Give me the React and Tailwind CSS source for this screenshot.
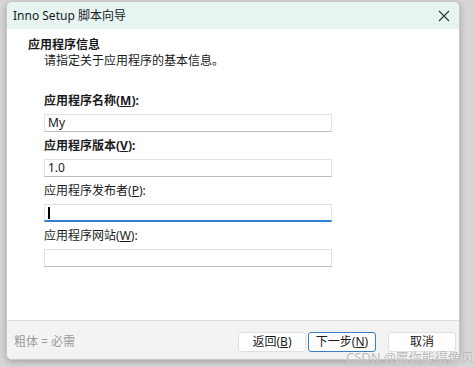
import React from 'react';

const font = { fontFamily: '"Segoe UI", "Noto Sans", "Noto Sans CJK SC", sans-serif' };

function Field({ label, hot, rest, bold, value, focused }) {
  return (
    <div className="flex flex-col">
      <div className={`text-[12px] leading-[16px] text-[#1a1a1a] ${bold ? 'font-bold' : ''}`}>
        {label}(<span className="underline">{hot}</span>){rest}
      </div>
      <div
        className={`mt-[5px] h-[18px] w-[288px] bg-white border border-[#e2e2e2] flex items-center px-[3px] text-[12px] text-[#1a1a1a] ${
          focused ? 'border-b-2 border-b-[#2f7fcf]' : 'border-b-[#bdbdbd]'
        }`}
      >
        {focused ? <span className="w-[2px] h-[12px] bg-black" /> : value}
      </div>
    </div>
  );
}

export default function App() {
  return (
    <div className="w-[474px] h-[367px] bg-[#d6d6d6] pl-[6px] pt-[1px] overflow-hidden relative" style={font}>
      <div className="w-[454px] h-[359px] flex flex-col rounded-[6px] overflow-hidden border border-[#c8c8c8] shadow-[0_2px_6px_rgba(0,0,0,0.25)] bg-white">
        <div className="h-[27px] bg-[#e6f4f2] flex items-center justify-between pl-[6px] pr-[8px] shrink-0">
          <span className="text-[12px] text-[#1a1a1a]">Inno Setup 脚本向导</span>
          <svg width="12" height="12" viewBox="0 0 12 12" className="mr-[1px]">
            <path d="M1 1 L11 11 M11 1 L1 11" stroke="#333" strokeWidth="1.1" />
          </svg>
        </div>
        <div className="flex-1 bg-white pl-[21px]">
          <div className="pt-[8px] text-[12px] leading-[16px] font-bold text-[#1a1a1a]">应用程序信息</div>
          <div className="pl-[16px] text-[12px] leading-[16px] text-[#1a1a1a]">请指定关于应用程序的基本信息。</div>
          <div className="pl-[16px] mt-[24px] flex flex-col gap-[6px]">
            <Field label="应用程序名称" hot="M" rest=":" bold value="My" />
            <Field label="应用程序版本" hot="V" rest=":" bold value="1.0" />
            <Field label="应用程序发布者" hot="P" rest=":" focused />
            <Field label="应用程序网站" hot="W" rest=":" />
          </div>
        </div>
        <div className="h-[39px] shrink-0 bg-[#f3f3f3] border-t border-[#dcdcdc] flex items-center pl-[7px] pr-[3px]">
          <span className="text-[12px] text-[#9a9a9a] mt-[3px]">粗体 = 必需</span>
          <div className="ml-auto flex items-center mt-[3px]">
            <button className="w-[68px] h-[20px] bg-white border border-[#e0e0e0] rounded-[3px] text-[12px] text-[#1a1a1a]">
              返回(<span className="underline">B</span>)
            </button>
            <button className="ml-[2px] w-[68px] h-[20px] bg-white border border-[#3a7ec8] rounded-[3px] text-[12px] text-[#1a1a1a]">
              下一步(<span className="underline">N</span>)
            </button>
            <button className="ml-[12px] w-[68px] h-[20px] bg-white border border-[#e0e0e0] rounded-[3px] text-[12px] text-[#1a1a1a]">
              取消
            </button>
          </div>
        </div>
      </div>
      <span className="absolute left-[346px] top-[349px] text-[13px] text-[#b8b8b8] leading-[16px]" style={{ textShadow: '0 0 1px #fff' }}>
        CSDN @愿你能得像风
      </span>
    </div>
  );
}
